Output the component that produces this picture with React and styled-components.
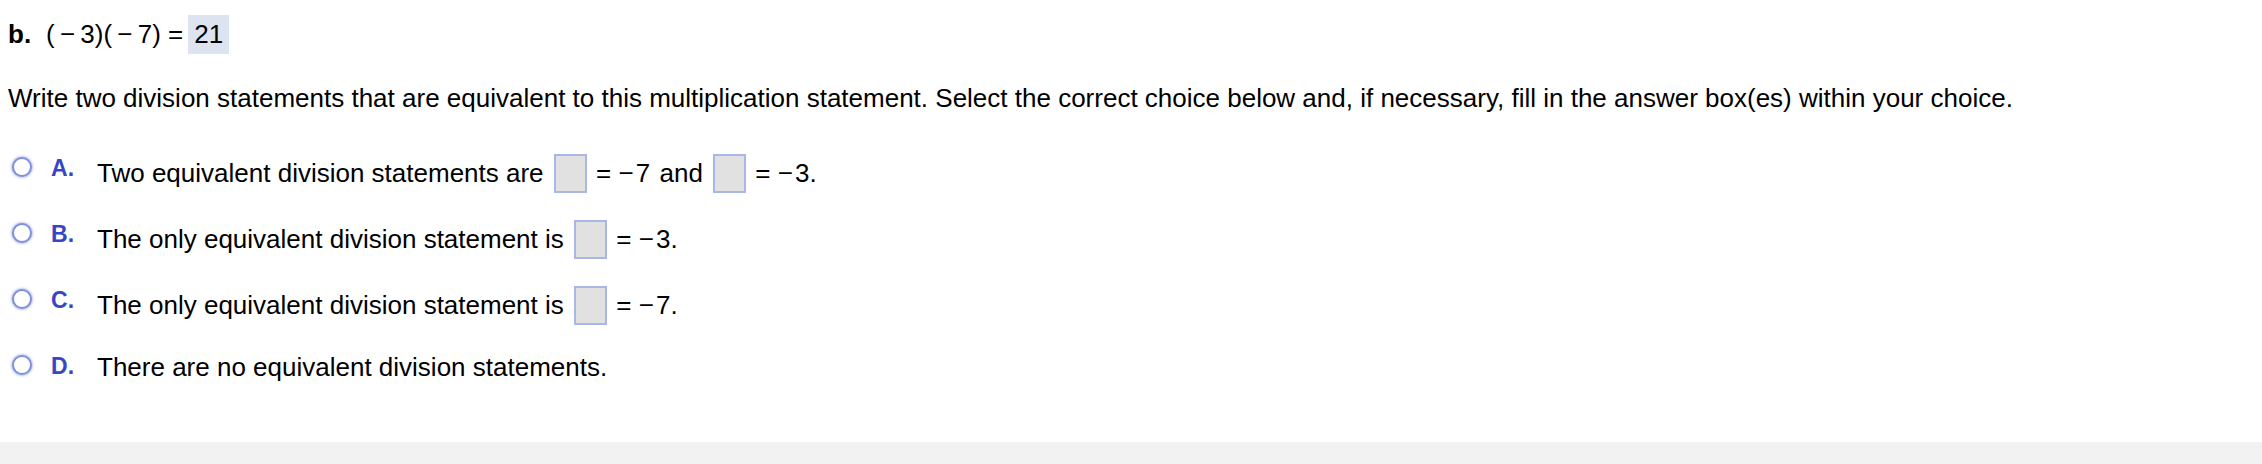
import React from "react";
import styled, { createGlobalStyle } from "styled-components";

const Global = createGlobalStyle`
  html, body { margin: 0; padding: 0; background: #ffffff; }
  body { font-family: "Liberation Sans", Arial, Helvetica, sans-serif; color: #000; }
`;

const Page = styled.div`
  min-height: 100vh;
  display: flex;
  flex-direction: column;
`;

const Main = styled.div`
  padding: 15px 8px 59px 8px;
  font-size: 26px;
  line-height: 31px;
`;

const Header = styled.div`
  display: flex;
  align-items: center;
  height: 39px;
  white-space: pre;
`;

const PartLabel = styled.span`
  font-weight: bold;
  margin-right: 15px;
`;

const Answer = styled.span`
  display: inline-flex;
  align-items: center;
  height: 39px;
  padding: 0 6px;
  margin-left: 5px;
  background: #dde3ef;
`;

const Instruction = styled.div`
  margin-top: 29px;
  white-space: nowrap;
`;

const Options = styled.div`
  margin-top: 40px;
  display: flex;
  flex-direction: column;
  gap: 27px;
`;

const Row = styled.div`
  display: flex;
  align-items: flex-start;
`;

const Radio = styled.span`
  box-sizing: border-box;
  width: 20px;
  height: 20px;
  margin: 3px 0 0 4px;
  border-radius: 50%;
  border: 2px solid #7f90dc;
  background: #fff;
  box-shadow: 0 0 2px 1px rgba(120, 138, 218, 0.45);
  flex: none;
`;

const Letter = styled.span`
  margin-left: 19px;
  margin-top: 3px;
  width: 46px;
  flex: none;
  font-size: 23px;
  line-height: 23px;
  font-weight: bold;
  color: #3547c4;
`;

const Content = styled.div`
  display: flex;
  align-items: center;
  min-height: ${(p) => (p.$boxed ? "39px" : "31px")};
  white-space: pre;
`;

const Box = styled.span`
  box-sizing: border-box;
  display: inline-block;
  width: 33px;
  height: 39px;
  margin: 0 2px 0 3px;
  background: #e1e1e1;
  border: 2px solid #a8b7e6;
`;

const Expr = styled.span`
  margin-right: ${(p) => p.$after || 0}px;
`;

const Footer = styled.div`
  flex: 1;
  min-height: 23px;
  background: #f2f2f2;
`;

const M = "\u2212";
const H = "\u200a";

function Option({ letter, boxed, children }) {
  return (
    <Row>
      <Radio />
      <Letter>{letter}.</Letter>
      <Content $boxed={boxed}>{children}</Content>
    </Row>
  );
}

export default function App() {
  return (
    <Page>
      <Global />
      <Main>
        <Header>
          <PartLabel>b.</PartLabel>
          <span>{`(\u2009${M}\u20093)(\u2009${M}\u20097) =`}</span>
          <Answer>21</Answer>
        </Header>
        <Instruction>
          Write two division statements that are equivalent to this multiplication statement. Select the correct choice below and, if necessary, fill in the answer box(es) within your choice.
        </Instruction>
        <Options>
          <Option letter="A" boxed>
            <span>Two equivalent division statements are </span>
            <Box />
            <Expr $after={2}>{` = ${M}${H}7`}</Expr>
            <span> and </span>
            <Box />
            <span>{` = ${M}${H}3.`}</span>
          </Option>
          <Option letter="B" boxed>
            <span>The only equivalent division statement is </span>
            <Box />
            <span>{` = ${M}${H}3.`}</span>
          </Option>
          <Option letter="C" boxed>
            <span>The only equivalent division statement is </span>
            <Box />
            <span>{` = ${M}${H}7.`}</span>
          </Option>
          <Option letter="D">
            <span>There are no equivalent division statements.</span>
          </Option>
        </Options>
      </Main>
      <Footer />
    </Page>
  );
}
